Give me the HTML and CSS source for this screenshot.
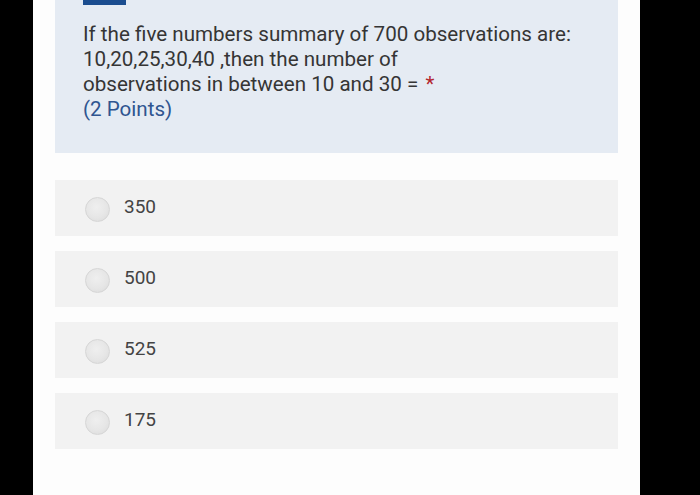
FILE: index.html
```html
<!DOCTYPE html>
<html>
<head>
<meta charset="utf-8">
<link rel="stylesheet" href="styles.css">
</head>
<body>
<div class="frame">
  <div class="side side-left"></div>
  <main class="page">
    <section class="question">
      <div class="tab"></div>
      <p class="qtext">If the five numbers summary of 700 observations are:<br>10,20,25,30,40 ,then the number of<br>observations in between 10 and 30 = <span class="star">*</span><br><span class="points">(2 Points)</span></p>
    </section>
    <div class="options">
      <label class="option"><span class="radio"></span><span class="otext">350</span></label>
      <label class="option"><span class="radio"></span><span class="otext">500</span></label>
      <label class="option"><span class="radio"></span><span class="otext">525</span></label>
      <label class="option"><span class="radio"></span><span class="otext">175</span></label>
    </div>
  </main>
  <div class="side side-right"></div>
</div>
</body>
</html>
```

FILE: styles.css
```css
html, body {
  margin: 0;
  padding: 0;
  background: #000;
}
.frame {
  display: flex;
  width: 700px;
  height: 495px;
  overflow: hidden;
}
.side-left { width: 33px; background: #000; flex: none; }
.side-right { width: 60px; background: #000; flex: none; }
.page {
  flex: none;
  width: 607px;
  background: #fdfdfd;
  padding: 0 22px;
  box-sizing: border-box;
  font-family: Roboto, "Liberation Sans", sans-serif;
}
.question {
  background: #e5ebf3;
  padding: 0 0 0 28px;
  height: 153px;
  box-sizing: border-box;
}
.tab {
  width: 43px;
  height: 5px;
  background: #1b4d8f;
}
.qtext {
  margin: 16.5px 0 0 0;
  font-size: 20.6px;
  line-height: 25.3px;
  color: #353535;
}
.star { color: #b3262e; margin-left: 2px; }
.points { color: #2f5590; }
.options {
  display: flex;
  flex-direction: column;
  gap: 15px;
  margin-top: 27px;
}
.option {
  display: flex;
  align-items: center;
  height: 56px;
  background: #f2f2f2;
  padding-left: 30px;
  box-sizing: border-box;
}
.radio {
  width: 25px;
  height: 25px;
  border-radius: 50%;
  box-sizing: border-box;
  border: 1px solid #d6d6d6;
  background: radial-gradient(circle at 45% 40%, #efefef 0%, #e6e6e6 55%, #d9d9d9 100%);
  flex: none;
  margin-top: 2px;
}
.otext {
  margin-left: 14px;
  font-size: 19px;
  color: #444;
  padding-bottom: 3px;
}
```
